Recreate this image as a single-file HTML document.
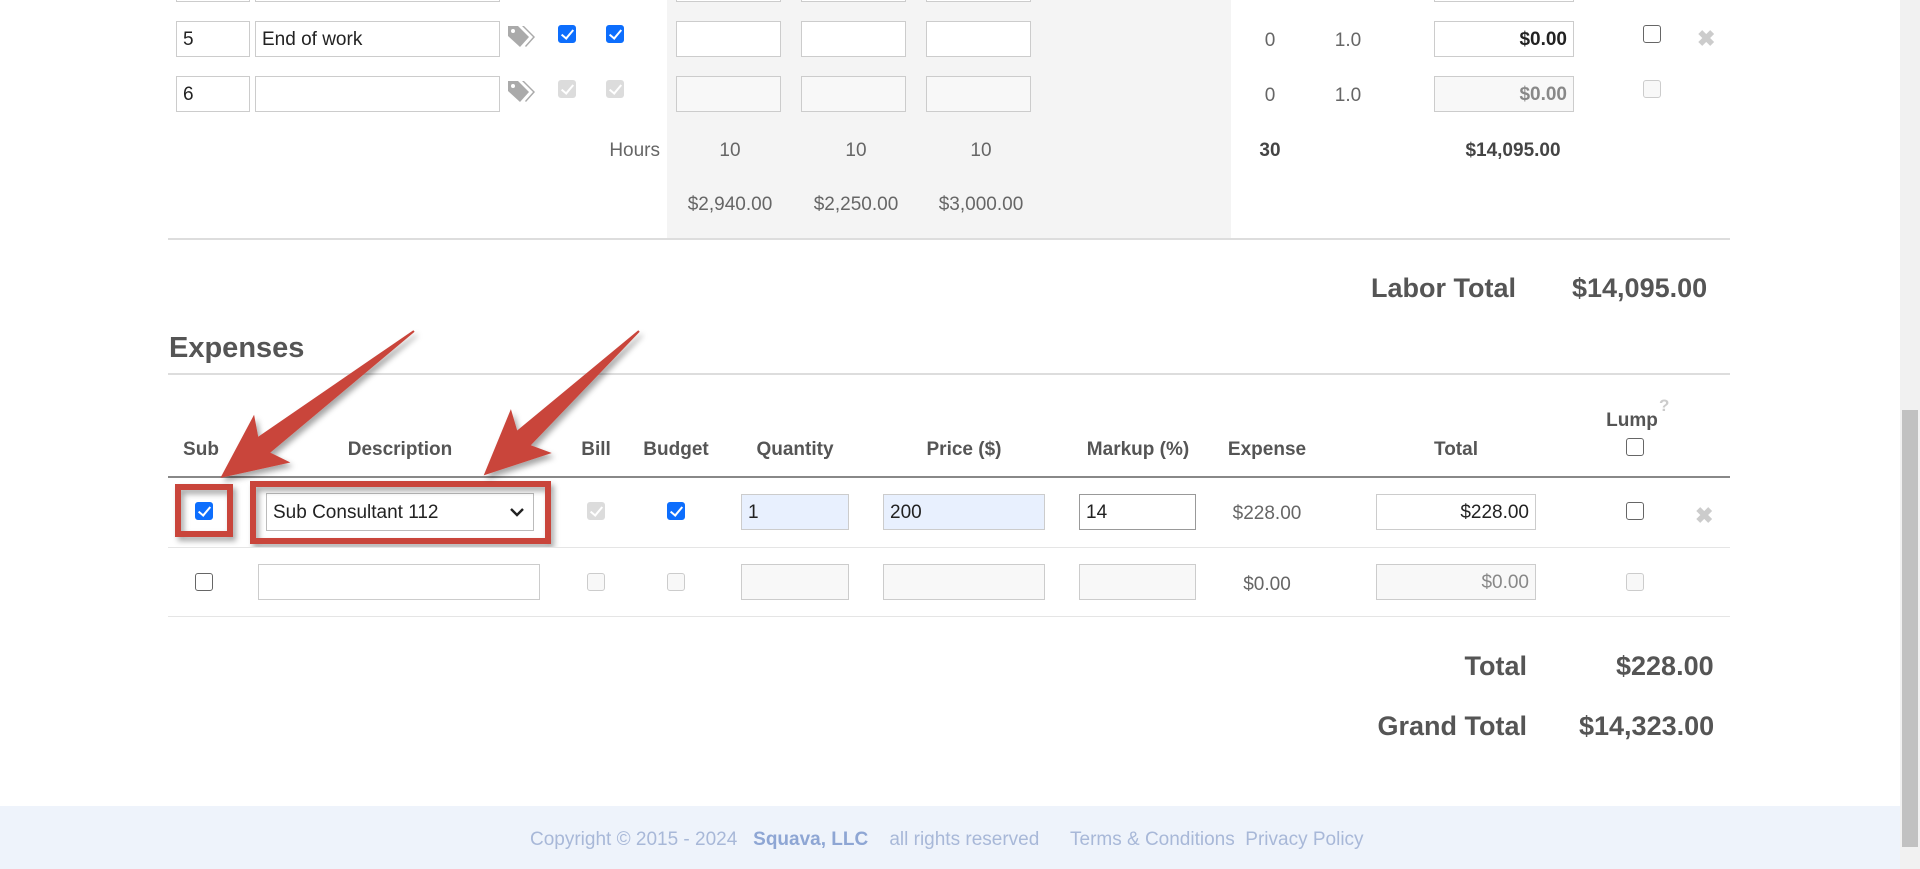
<!DOCTYPE html>
<html><head><meta charset="utf-8"><style>
*{box-sizing:border-box;margin:0;padding:0}
body{width:1920px;height:869px;position:relative;overflow:hidden;background:#fff;font-family:"Liberation Sans",sans-serif;color:#666}
.a{position:absolute}
.in{position:absolute;border:1px solid #ccc;background:#fff;height:36px;font-size:19px;color:#222;padding:7px 6px 5px;line-height:22px}
.dis{background:#f8f8f8}
.cb{position:absolute;width:18px;height:18px;border-radius:3px;border:1.5px solid #666;background:#fff}
.cbon{background:#0d6efd;border-color:#0d6efd}
.cbon::after,.cbg::after{content:"";position:absolute;left:5px;top:1px;width:5px;height:10px;border:solid #fff;border-width:0 2.5px 2.5px 0;transform:rotate(40deg)}
.cbg{background:#dcdcdc;border-color:#dcdcdc}
.cbd{border-color:#ccc;background:#f8f8f8}
.t{position:absolute;font-size:19px;color:#666;white-space:nowrap;margin-top:2px}
.h{position:absolute;font-size:19px;font-weight:bold;color:#555;white-space:nowrap;transform:translateX(-50%);margin-top:2px}
.c{transform:translateX(-50%)}
.big{position:absolute;font-size:27px;font-weight:bold;color:#555;white-space:nowrap;margin-top:2px}
.x{position:absolute;font-size:22px;color:#ccc;font-weight:bold}
</style></head><body>
<div class="a" style="left:667px;top:0;width:564px;height:239px;background:#f4f4f4"></div>
<div class="in" style="left:176px;top:-34px;width:74px"></div>
<div class="in" style="left:255px;top:-34px;width:245px"></div>
<div class="in" style="left:676px;top:-34px;width:105px"></div>
<div class="in" style="left:801px;top:-34px;width:105px"></div>
<div class="in" style="left:926px;top:-34px;width:105px"></div>
<div class="in" style="left:1434px;top:-34px;width:140px"></div>
<div class="in" style="left:176px;top:21px;width:74px">5</div>
<div class="in" style="left:255px;top:21px;width:245px">End of work</div>
<svg class="a" style="left:506px;top:24px" width="30" height="26" viewBox="0 0 30 26"><path d="M2 2h10l11 11-9 10L2 12z" fill="#aaa"/><path d="M16 2h2l11 11-9 10-1-1 8-9z" fill="#aaa"/><circle cx="7" cy="7" r="2" fill="#fff"/></svg>
<div class="cb cbon" style="left:558px;top:25px"></div>
<div class="cb cbon" style="left:606px;top:25px"></div>
<div class="in" style="left:676px;top:21px;width:105px"></div>
<div class="in" style="left:801px;top:21px;width:105px"></div>
<div class="in" style="left:926px;top:21px;width:105px"></div>
<div class="t c" style="left:1270px;top:28px">0</div>
<div class="t c" style="left:1348px;top:28px">1.0</div>
<div class="in" style="left:1434px;top:21px;width:140px;text-align:right;font-weight:bold">$0.00</div>
<div class="cb" style="left:1643px;top:25px"></div>
<div class="x" style="left:1697px;top:26px">✖</div>
<div class="in" style="left:176px;top:76px;width:74px">6</div>
<div class="in" style="left:255px;top:76px;width:245px"></div>
<svg class="a" style="left:506px;top:79px" width="30" height="26" viewBox="0 0 30 26"><path d="M2 2h10l11 11-9 10L2 12z" fill="#aaa"/><path d="M16 2h2l11 11-9 10-1-1 8-9z" fill="#aaa"/><circle cx="7" cy="7" r="2" fill="#fff"/></svg>
<div class="cb cbg" style="left:558px;top:80px"></div>
<div class="cb cbg" style="left:606px;top:80px"></div>
<div class="in dis" style="left:676px;top:76px;width:105px"></div>
<div class="in dis" style="left:801px;top:76px;width:105px"></div>
<div class="in dis" style="left:926px;top:76px;width:105px"></div>
<div class="t c" style="left:1270px;top:83px">0</div>
<div class="t c" style="left:1348px;top:83px">1.0</div>
<div class="in dis" style="left:1434px;top:76px;width:140px;text-align:right;font-weight:bold;color:#888">$0.00</div>
<div class="cb cbd" style="left:1643px;top:80px"></div>
<div class="t" style="right:1260px;top:138px">Hours</div>
<div class="t c" style="left:730px;top:138px">10</div>
<div class="t c" style="left:856px;top:138px">10</div>
<div class="t c" style="left:981px;top:138px">10</div>
<div class="t c" style="left:1270px;top:138px;font-weight:bold;color:#444">30</div>
<div class="t c" style="left:1513px;top:138px;font-weight:bold;color:#444">$14,095.00</div>
<div class="t c" style="left:730px;top:192px">$2,940.00</div>
<div class="t c" style="left:856px;top:192px">$2,250.00</div>
<div class="t c" style="left:981px;top:192px">$3,000.00</div>
<div class="a" style="left:168px;top:238px;width:1562px;height:2px;background:#ddd"></div>
<div class="big" style="left:1371px;top:271px">Labor Total</div>
<div class="big" style="left:1572px;top:271px">$14,095.00</div>
<div class="big" style="left:169px;top:330px;font-size:29px">Expenses</div>
<div class="a" style="left:168px;top:373px;width:1562px;height:2px;background:#ddd"></div>
<div class="h" style="left:201px;top:437px">Sub</div>
<div class="h" style="left:400px;top:437px">Description</div>
<div class="h" style="left:596px;top:437px">Bill</div>
<div class="h" style="left:676px;top:437px">Budget</div>
<div class="h" style="left:795px;top:437px">Quantity</div>
<div class="h" style="left:964px;top:437px">Price ($)</div>
<div class="h" style="left:1138px;top:437px">Markup (%)</div>
<div class="h" style="left:1267px;top:437px">Expense</div>
<div class="h" style="left:1456px;top:437px">Total</div>
<div class="h" style="left:1632px;top:408px">Lump</div>
<div class="a" style="left:1659px;top:396px;font-size:17px;font-weight:bold;color:#ccc">?</div>
<div class="cb" style="left:1626px;top:438px"></div>
<div class="a" style="left:168px;top:476px;width:1562px;height:2px;background:#888"></div>
<div class="cb cbon" style="left:195px;top:502px"></div>
<div class="in" style="left:266px;top:493px;width:268px;height:38px;border-color:#bbb;padding-top:8px">Sub Consultant 112</div>
<svg class="a" style="left:509px;top:506px" width="16" height="12" viewBox="0 0 16 12"><path d="M2 3l6 6 6-6" stroke="#222" stroke-width="2.4" fill="none"/></svg>
<div class="cb cbg" style="left:587px;top:502px"></div>
<div class="cb cbon" style="left:667px;top:502px"></div>
<div class="in" style="left:741px;top:494px;width:108px;background:#e8f0fe">1</div>
<div class="in" style="left:883px;top:494px;width:162px;background:#e8f0fe">200</div>
<div class="in" style="left:1079px;top:494px;width:117px;border-color:#999">14</div>
<div class="t c" style="left:1267px;top:501px">$228.00</div>
<div class="in" style="left:1376px;top:494px;width:160px;text-align:right">$228.00</div>
<div class="cb" style="left:1626px;top:502px"></div>
<div class="x" style="left:1695px;top:503px">✖</div>
<div class="a" style="left:168px;top:547px;width:1562px;height:1px;background:#e5e5e5"></div>
<div class="cb" style="left:195px;top:573px"></div>
<div class="in" style="left:258px;top:564px;width:282px"></div>
<div class="cb cbd" style="left:587px;top:573px"></div>
<div class="cb cbd" style="left:667px;top:573px"></div>
<div class="in dis" style="left:741px;top:564px;width:108px"></div>
<div class="in dis" style="left:883px;top:564px;width:162px"></div>
<div class="in dis" style="left:1079px;top:564px;width:117px"></div>
<div class="t c" style="left:1267px;top:572px">$0.00</div>
<div class="in dis" style="left:1376px;top:564px;width:160px;text-align:right;color:#888">$0.00</div>
<div class="cb cbd" style="left:1626px;top:573px"></div>
<div class="a" style="left:168px;top:616px;width:1562px;height:1px;background:#e5e5e5"></div>
<svg class="a" style="left:0;top:0" width="1920" height="869">
<defs><filter id="s"><feDropShadow dx="3" dy="4" stdDeviation="3" flood-color="#000" flood-opacity="0.35"/></filter></defs>
<g filter="url(#s)" fill="none" stroke="#c9443a" stroke-width="6">
<rect x="178" y="487" width="52" height="47"/>
<rect x="253" y="484" width="295" height="57"/>
</g>
<g filter="url(#s)" fill="#c9443a">
<polygon transform="translate(414,331) rotate(142.8)" points="0,-1 188,-10 178,-30 243,0 178,30 188,10 0,1"/>
<polygon transform="translate(639,331) rotate(137.1)" points="0,-1 157,-10 147,-30 212,0 147,30 157,10 0,1"/>
</g>
</svg>
<div class="big" style="right:393px;top:649px">Total</div>
<div class="big" style="left:1616px;top:649px">$228.00</div>
<div class="big" style="right:393px;top:709px">Grand Total</div>
<div class="big" style="left:1579px;top:709px">$14,323.00</div>
<div class="a" style="left:0;top:806px;width:1900px;height:63px;background:#eef3fb"></div>
<div class="a" style="left:530px;top:829px;font-size:19px;color:#a8b8d8;white-space:nowrap">Copyright © 2015 - 2024 &nbsp;&nbsp;<b style="color:#8ea6d4">Squava, LLC</b>&nbsp;&nbsp;&nbsp; all rights reserved</div>
<div class="a" style="left:1070px;top:829px;font-size:19px;color:#a8b8d8;white-space:nowrap">Terms &amp; Conditions&nbsp; Privacy Policy</div>
<div class="a" style="left:1900px;top:0;width:20px;height:869px;background:#f1f1f1"></div>
<div class="a" style="left:1902px;top:410px;width:16px;height:437px;background:#c1c1c1"></div>
</body></html>
